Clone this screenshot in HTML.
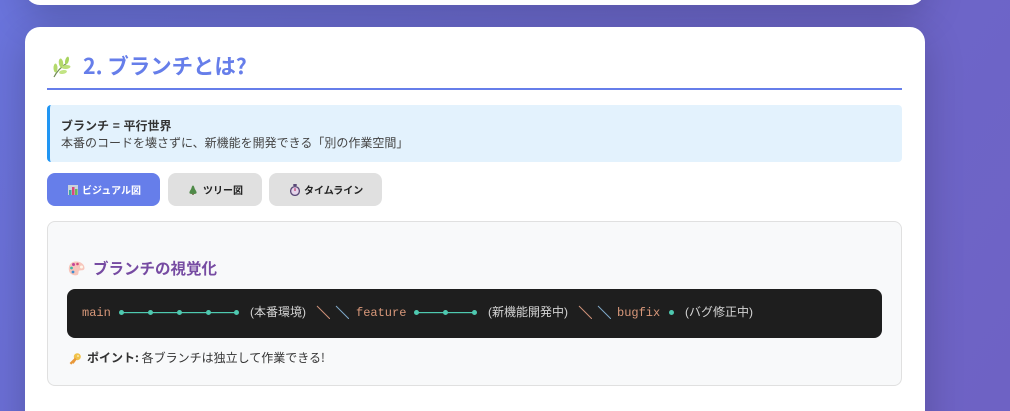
<!DOCTYPE html>
<html lang="ja">
<head>
<meta charset="utf-8">
<title>ブランチとは?</title>
<style>
html,body{margin:0;padding:0;width:1010px;height:411px;overflow:hidden}
body{position:relative;background:linear-gradient(125deg,#6a74dc 0%,#6c68cc 50%,#6e62c4 100%);font-family:"WenQuanYi Zen Hei","Noto Sans CJK JP",sans-serif;color:#333}
.a{position:absolute;white-space:nowrap}
.card{position:absolute;left:25px;width:900px;background:#fff;border-radius:15px;box-shadow:0 10px 40px rgba(0,0,0,.2)}
.btn{position:absolute;top:173px;height:33px;border-radius:8px;background:#e0e0e0;color:#222;font-size:10px;font-weight:bold;line-height:33px;white-space:nowrap}
.btn span{position:absolute;top:0}
.btn svg{position:absolute;top:12px}
.mono{font-family:"Liberation Mono",monospace;color:#d9987a;font-size:12px}
.g{font-family:"Liberation Sans","WenQuanYi Zen Hei",sans-serif;color:#d4d4d4;font-size:12px}
.sl{position:absolute;top:305px;width:14px;height:14px}
.dot{position:absolute;top:310px;width:5px;height:5px;border-radius:50%;background:#4ec9b0}
.ln{position:absolute;top:312px;height:1px;background:#4ec9b0;box-shadow:0 .5px 0 rgba(78,201,176,.4)}
</style>
</head>
<body>
<div class="card" style="top:-60px;height:65px"></div>
<div class="card" style="top:27px;height:420px"></div>

<svg class="a" style="left:52px;top:56px" width="19" height="22" viewBox="0 0 19 22">
<path d="M2 21C5 15 9 11 15 7" stroke="#6f8a55" stroke-width="1.2" fill="none"/>
<ellipse cx="3.5" cy="12" rx="2" ry="4.5" fill="#b3d96a"/>
<ellipse cx="9" cy="7" rx="2.2" ry="4.5" fill="#b3d96a" transform="rotate(-8 9 7)"/>
<ellipse cx="15" cy="4.5" rx="1.8" ry="4" fill="#a8d45f" transform="rotate(15 15 4.5)"/>
<ellipse cx="14" cy="11" rx="4.5" ry="2" fill="#bde07a" transform="rotate(-5 14 11)"/>
<ellipse cx="11" cy="16" rx="4" ry="1.9" fill="#c2e484" transform="rotate(-10 11 16)"/>
</svg>
<div class="a" style="left:83px;top:49px;font-size:21.4px;line-height:34px;font-weight:bold;color:#667eea">2. ブランチとは?</div>
<div class="a" style="left:47px;top:88px;width:855px;height:2px;background:#667eea"></div>

<div class="a" style="left:47px;top:105px;width:852px;height:57px;background:#e3f2fd;border-left:3px solid #2196f3;border-radius:4px"></div>
<div class="a" style="left:61px;top:117px;font-size:12px;line-height:17px;font-weight:bold;color:#333;word-spacing:1px">ブランチ = 平行世界</div>
<div class="a" style="left:61px;top:134px;font-size:12px;line-height:17px;color:#444">本番のコードを壊さずに、新機能を開発できる「別の作業空間」</div>

<div class="btn" style="left:47px;width:113px;background:#667eea;color:#fff">
<svg style="left:21px" width="10" height="10" viewBox="0 0 10 10"><rect width="10" height="10" fill="#c9d2dc"/><rect x="1" y="5" width="2.5" height="5" fill="#3fa7a0"/><rect x="4" y="2" width="2.5" height="8" fill="#d9477e"/><rect x="7" y="4" width="2.5" height="6" fill="#69b85a"/></svg>
<span style="left:35px">ビジュアル図</span></div>
<div class="btn" style="left:168px;width:94px">
<svg style="left:21px" width="8" height="10" viewBox="0 0 8 10"><path d="M4 .5C5 .5 5.3 2.5 5.8 3.8C6.6 5.3 7.6 6.5 7.6 7.6C7.6 8.8 6 9 4 9C2 9 .4 8.8 .4 7.6C.4 6.5 1.4 5.3 2.2 3.8C2.7 2.5 3 .5 4 .5Z" fill="#4f8a48"/><rect x="3.2" y="8.6" width="1.6" height="1.4" fill="#7a6a4a"/></svg>
<span style="left:35px">ツリー図</span></div>
<div class="btn" style="left:269px;width:113px">
<svg style="left:21px;top:11px" width="10" height="12" viewBox="0 0 10 12"><rect x="3.3" y="0" width="3.4" height="2" fill="#5a4a78"/><circle cx="5" cy="7" r="4.4" fill="#e4d4ea" stroke="#5a4a78" stroke-width="1.3"/><path d="M5 7V4.2" stroke="#c0386a" stroke-width="1.2"/></svg>
<span style="left:35px">タイムライン</span></div>

<div class="a" style="left:47px;top:221px;width:853px;height:163px;background:#f8f9fa;border:1px solid #e0e0e0;border-radius:8px"></div>
<svg class="a" style="left:68px;top:261px" width="17" height="15" viewBox="0 0 17 15">
<path d="M8 .5C13 .5 16.5 3.5 16.5 7C16.5 10 13 9 11.5 9.5C10 10 11 12 10 13.5C9 15 4 14.5 2 12C-.5 8.5 .5 .5 8 .5Z" fill="#f7c6bc"/>
<circle cx="5.5" cy="3.5" r="1.5" fill="#c2469a"/><circle cx="9.5" cy="3" r="1.3" fill="#d64a7a"/><circle cx="3.5" cy="7" r="1.4" fill="#3fb8a8"/><circle cx="5" cy="11" r="1.4" fill="#3f8fd0"/><circle cx="13.5" cy="6" r="1.5" fill="#fff6ea"/>
</svg>
<div class="a" style="left:93px;top:257px;font-size:15.5px;line-height:22px;font-weight:bold;color:#764ba2">ブランチの視覚化</div>

<div class="a" style="left:67px;top:289px;width:815px;height:49px;background:#1e1e1e;border-radius:8px"></div>

<div class="a mono" style="left:82px;top:305px;line-height:17px">main</div>
<div class="ln" style="left:121px;width:116px"></div>
<div class="dot" style="left:119px"></div><div class="dot" style="left:148px"></div><div class="dot" style="left:177px"></div><div class="dot" style="left:206px"></div><div class="dot" style="left:234px"></div>
<div class="a g" style="left:250px;top:304px;line-height:17px">(本番環境)</div>
<svg class="sl" style="left:316px" viewBox="0 0 14 14"><path d="M1 1L14 14" stroke="#ce9178" stroke-width="1" fill="none"/></svg>
<svg class="sl" style="left:335px" viewBox="0 0 14 14"><path d="M1 1L14 14" stroke="#7fa8c8" stroke-width="1" fill="none"/></svg>
<div class="a mono" style="left:356px;top:305px;line-height:17px">feature</div>
<div class="ln" style="left:416px;width:58px"></div>
<div class="dot" style="left:414px"></div><div class="dot" style="left:443px"></div><div class="dot" style="left:472px"></div>
<div class="a g" style="left:488px;top:304px;line-height:17px">(新機能開発中)</div>
<svg class="sl" style="left:578px" viewBox="0 0 14 14"><path d="M1 1L14 14" stroke="#ce9178" stroke-width="1" fill="none"/></svg>
<svg class="sl" style="left:597px" viewBox="0 0 14 14"><path d="M1 1L14 14" stroke="#7fa8c8" stroke-width="1" fill="none"/></svg>
<div class="a mono" style="left:617px;top:305px;line-height:17px">bugfix</div>
<div class="dot" style="left:669px"></div>
<div class="a g" style="left:685px;top:304px;line-height:17px">(バグ修正中)</div>

<svg class="a" style="left:69px;top:353px" width="12" height="12" viewBox="0 0 12 12"><circle cx="8.3" cy="3.7" r="3.5" fill="#f0c24a"/><circle cx="9" cy="3" r=".9" fill="#fff3c8"/><path d="M6 4.6L.6 10L2.2 11.6L3.6 10.2L4.6 10.8L7.6 6.6Z" fill="#e8983a"/></svg>
<div class="a" style="left:87px;top:349px;font-size:12px;line-height:17px;color:#333"><b>ポイント:</b> 各ブランチは独立して作業できる!</div>
</body>
</html>
